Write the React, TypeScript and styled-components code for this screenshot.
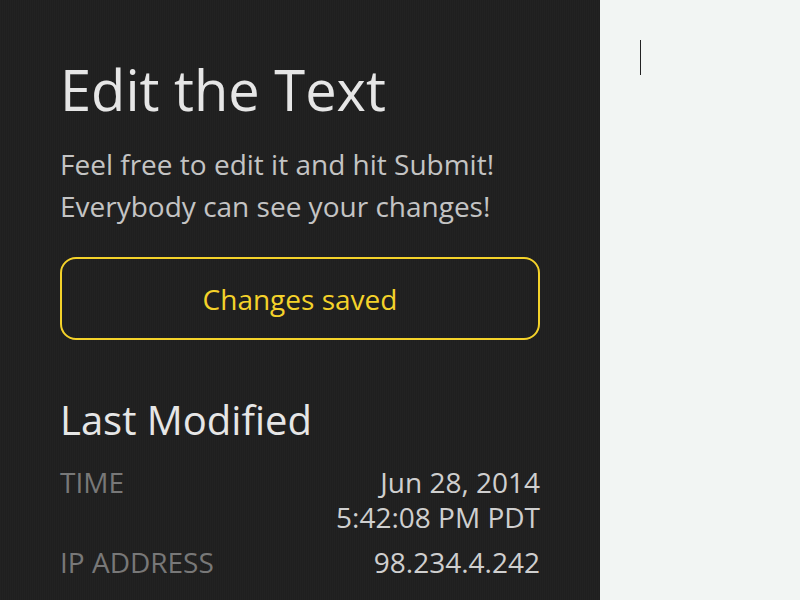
import styled, { createGlobalStyle } from 'styled-components';

const GlobalStyle = createGlobalStyle`
  html, body {
    margin: 0;
    padding: 0;
    background: #f2f5f3;
  }
  body {
    font-family: "Open Sans", "Noto Sans", sans-serif;
  }
`;

const Page = styled.div`
  display: flex;
  width: 800px;
  height: 600px;
  overflow: hidden;
`;

const Sidebar = styled.div`
  width: 600px;
  flex-shrink: 0;
  box-sizing: border-box;
  padding: 50px 60px 0;
  background: repeating-linear-gradient(90deg, #222 0 1px, #1f1f1f 1px 2px);
  display: flex;
  flex-direction: column;
`;

const Title = styled.h1`
  margin: 0;
  font-size: 56px;
  font-weight: 400;
  line-height: 78px;
  color: #e6e6e6;
`;

const Intro = styled.p`
  margin: 15px 0 0;
  font-size: 28px;
  line-height: 42px;
  color: #c4c4c4;
`;

const StatusButton = styled.div`
  margin-top: 30px;
  height: 83px;
  box-sizing: border-box;
  border: 2px solid #f4d22a;
  border-radius: 16px;
  display: flex;
  align-items: center;
  justify-content: center;
  font-size: 28px;
  color: #f4d22a;
`;

const SectionTitle = styled.h2`
  margin: 54px 0 0;
  font-size: 40px;
  font-weight: 400;
  line-height: 52px;
  color: #e6e6e6;
`;

const InfoRow = styled.div<{ $gap?: number }>`
  display: flex;
  justify-content: space-between;
  margin-top: ${(p) => p.$gap ?? 0}px;
  font-size: 28px;
  line-height: 35px;
`;

const Label = styled.div`
  color: #787878;
`;

const Value = styled.div`
  color: #cfcfcf;
  text-align: right;
`;

const Editor = styled.div`
  flex: 1;
  background: #f2f5f3;
  padding: 40px 0 0 40px;
`;

const Caret = styled.span`
  display: block;
  width: 1px;
  height: 35px;
  background: #222;
`;

export default function App() {
  return (
    <>
      <GlobalStyle />
      <Page>
        <Sidebar>
          <Title>Edit the Text</Title>
          <Intro>
            Feel free to edit it and hit Submit!
            <br />
            Everybody can see your changes!
          </Intro>
          <StatusButton>Changes saved</StatusButton>
          <SectionTitle>Last Modified</SectionTitle>
          <InfoRow $gap={19}>
            <Label>TIME</Label>
            <Value>
              Jun 28, 2014
              <br />
              5:42:08 PM PDT
            </Value>
          </InfoRow>
          <InfoRow $gap={10}>
            <Label>IP ADDRESS</Label>
            <Value>98.234.4.242</Value>
          </InfoRow>
        </Sidebar>
        <Editor>
          <Caret />
        </Editor>
      </Page>
    </>
  );
}
